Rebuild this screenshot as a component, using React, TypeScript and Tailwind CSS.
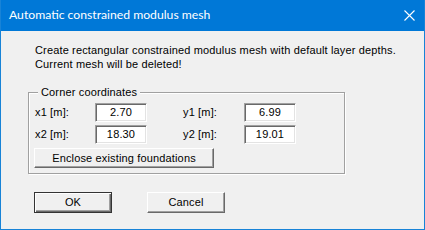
import React from "react";

const btnBase =
  "flex items-center justify-center bg-[#f0f0f0] text-[11px] text-black border border-t-white border-l-white border-r-[#696969] border-b-[#696969] shadow-[inset_-1px_-1px_0_#a0a0a0]";

function Field({ value }: { value: string }) {
  return (
    <div className="w-[52px] h-[19px] bg-white border border-t-[#a0a0a0] border-l-[#a0a0a0] border-r-white border-b-white shadow-[inset_1px_1px_0_#696969,inset_-1px_-1px_0_#e3e3e3] flex items-center justify-center text-[11px] leading-none text-black">
      {value}
    </div>
  );
}

export default function App() {
  return (
    <div
      className="w-[425px] h-[230px] flex flex-col bg-[#f0f0f0] border-x border-b border-[#1883d7] overflow-hidden tracking-[0.15px]"
      style={{ fontFamily: '"Liberation Sans", Arial, sans-serif' }}
    >
      <div className="h-[31px] shrink-0 bg-[#0078d7] flex items-center justify-between pl-[9px] pr-[9px] -mx-px tracking-normal">
        <span
          className="text-white text-[12.2px]"
          style={{ fontFamily: 'Lato, "Noto Sans", sans-serif' }}
        >
          Automatic constrained modulus mesh
        </span>
        <svg width="11" height="11" viewBox="0 0 11 11" className="mr-[1px]">
          <path d="M0.5 0.5 L10.5 10.5 M10.5 0.5 L0.5 10.5" stroke="white" strokeWidth="1.1" />
        </svg>
      </div>
      <div className="flex flex-col pt-[12px]">
        <div className="ml-[34px] text-[11px] leading-[14px] text-black">
          <div>Create rectangular constrained modulus mesh with default layer depths.</div>
          <div>Current mesh will be deleted!</div>
        </div>
        <div className="relative ml-[27px] mt-[21px] w-[317px] border border-[#a0a0a0] shadow-[1px_1px_0_#fff,inset_1px_1px_0_#fff] pt-[10px] pb-[5px] pl-[6px] flex flex-col gap-[3px]">
          <div className="absolute left-[9px] top-[-8px] px-[3px] bg-[#f0f0f0] text-[11px] leading-[14px] text-black">
            Corner coordinates
          </div>
          <div className="flex items-center text-[11px] text-black">
            <div className="w-[60px]">x1 [m]:</div>
            <Field value="2.70" />
            <div className="w-[36px]" />
            <div className="w-[61px]">y1 [m]:</div>
            <Field value="6.99" />
          </div>
          <div className="flex items-center text-[11px] text-black">
            <div className="w-[60px]">x2 [m]:</div>
            <Field value="18.30" />
            <div className="w-[36px]" />
            <div className="w-[61px]">y2 [m]:</div>
            <Field value="19.01" />
          </div>
          <div className={`${btnBase} mt-[1px] -ml-px w-[180px] h-[20px]`}>Enclose existing foundations</div>
        </div>
        <div className="flex ml-[33px] mt-[18px] gap-[35px]">
          <div className="w-[78px] h-[21px] border border-[#333] flex">
            <div className="flex-1 flex items-center justify-center text-[11px] text-black bg-[#f0f0f0] shadow-[inset_1px_1px_0_#fff,inset_-1px_-1px_0_#696969,inset_-2px_-2px_0_#a0a0a0]">
              OK
            </div>
          </div>
          <div className={`${btnBase} w-[78px] h-[21px]`}>Cancel</div>
        </div>
      </div>
    </div>
  );
}
